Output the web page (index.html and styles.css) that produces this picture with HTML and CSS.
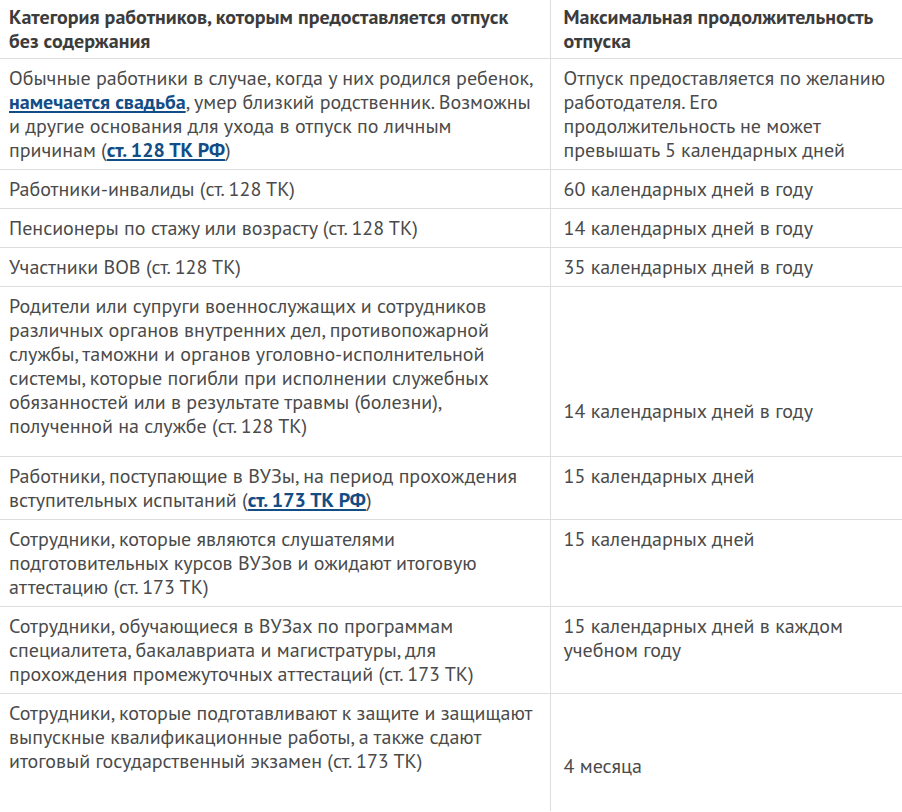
FILE: index.html
```html
<!DOCTYPE html>
<html lang="ru">
<head>
<meta charset="utf-8">
<title>Отпуск без содержания</title>
<link rel="stylesheet" href="styles.css">
</head>
<body>
<table class="leave-table">
  <colgroup>
    <col class="col-cat">
    <col class="col-dur">
  </colgroup>
  <thead>
    <tr>
      <th class="cell cell-cat">Категория работников, которым предоставляется отпуск без содержания</th>
      <th class="cell cell-dur">Максимальная продолжительность отпуска</th>
    </tr>
  </thead>
  <tbody>
    <tr>
      <td class="cell cell-cat">Обычные работники в случае, когда у них родился ребенок, <a class="doc-link" href="#">намечается свадьба</a>, умер близкий родственник. Возможны и другие основания для ухода в отпуск по личным причинам (<a class="doc-link" href="#">ст. 128 ТК РФ</a>)</td>
      <td class="cell cell-dur">Отпуск предоставляется по желанию работодателя. Его продолжительность не может превышать 5 календарных дней</td>
    </tr>
    <tr>
      <td class="cell cell-cat">Работники-инвалиды (ст. 128 ТК)</td>
      <td class="cell cell-dur">60 календарных дней в году</td>
    </tr>
    <tr>
      <td class="cell cell-cat">Пенсионеры по стажу или возрасту (ст. 128 ТК)</td>
      <td class="cell cell-dur">14 календарных дней в году</td>
    </tr>
    <tr>
      <td class="cell cell-cat">Участники ВОВ (ст. 128 ТК)</td>
      <td class="cell cell-dur">35 календарных дней в году</td>
    </tr>
    <tr>
      <td class="cell cell-cat cell-tall">Родители или супруги военнослужащих и сотрудников различных органов внутренних дел, противопожарной службы, таможни и органов уголовно-исполнительной системы, которые погибли при исполнении служебных обязанностей или в результате травмы (болезни), полученной на службе (ст. 128 ТК)</td>
      <td class="cell cell-dur cell-low">14 календарных дней в году</td>
    </tr>
    <tr>
      <td class="cell cell-cat">Работники, поступающие в ВУЗы, на период прохождения вступительных испытаний (<a class="doc-link" href="#">ст. 173 ТК РФ</a>)</td>
      <td class="cell cell-dur">15 календарных дней</td>
    </tr>
    <tr>
      <td class="cell cell-cat">Сотрудники, которые являются слушателями подготовительных курсов ВУЗов и ожидают итоговую аттестацию (ст. 173 ТК)</td>
      <td class="cell cell-dur">15 календарных дней</td>
    </tr>
    <tr>
      <td class="cell cell-cat">Сотрудники, обучающиеся в ВУЗах по программам специалитета, бакалавриата и магистратуры, для прохождения промежуточных аттестаций (ст. 173 ТК)</td>
      <td class="cell cell-dur">15 календарных дней в каждом учебном году</td>
    </tr>
    <tr>
      <td class="cell cell-cat cell-last">Сотрудники, которые подготавливают к защите и защищают выпускные квалификационные работы, а также сдают итоговый государственный экзамен (ст. 173 ТК)</td>
      <td class="cell cell-dur cell-low">4 месяца</td>
    </tr>
  </tbody>
</table>
</body>
</html>
```
FILE: styles.css
```css
html, body {
  margin: 0;
  padding: 0;
  background: #ffffff;
}

body {
  font-family: "PT Sans", "Open Sans", sans-serif;
  font-size: 20px;
  line-height: 24px;
  color: #4a4a4a;
}

.leave-table {
  width: 902px;
  border-collapse: collapse;
  table-layout: fixed;
}

.col-cat {
  width: 550px;
}

.col-dur {
  width: 352px;
}

.cell {
  text-align: left;
  vertical-align: top;
  padding: 7px 10px 7px 9px;
  border-top: 1px solid #dddddd;
  border-bottom: 1px solid #dddddd;
}

thead .cell {
  border-top: none;
  padding-top: 5px;
  padding-bottom: 5px;
  font-weight: 700;
  color: #3c3c3c;
}

.cell-cat {
  border-right: 1px solid #dddddd;
}

.cell-dur {
  padding-left: 13px;
  padding-right: 12px;
}

.cell-tall {
  padding-bottom: 18px;
}

.cell-last {
  padding-bottom: 38px;
}

.cell-low {
  vertical-align: bottom;
  padding-bottom: 33px;
}

tbody tr:last-child .cell {
  border-bottom: none;
}

.doc-link {
  color: #124d86;
  font-weight: 700;
  text-decoration: underline;
  text-decoration-thickness: 2px;
  text-underline-offset: 2px;
}
```
